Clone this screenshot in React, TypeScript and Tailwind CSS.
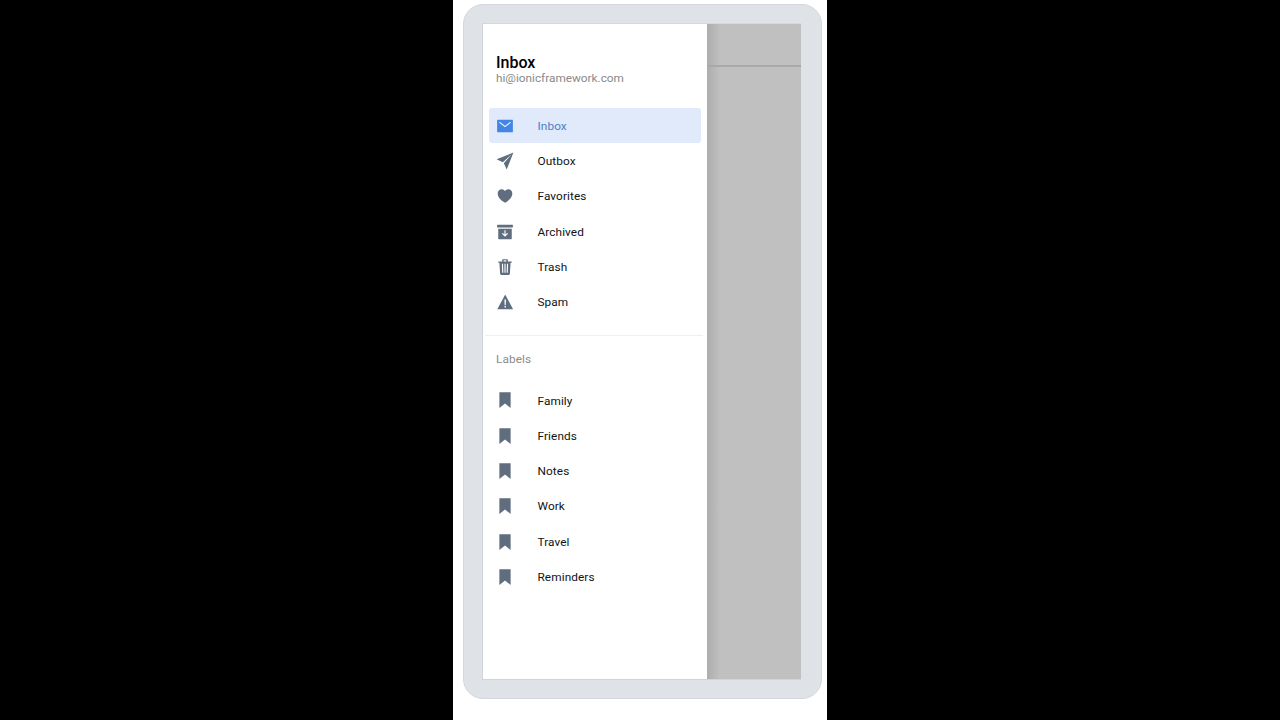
import type { ComponentType } from 'react';
import {
  IoArchiveSharp,
  IoBookmarkSharp,
  IoHeartSharp,
  IoMailSharp,
  IoPaperPlaneSharp,
  IoTrashSharp,
  IoWarningSharp,
} from 'react-icons/io5';

interface RowProps {
  icon: ComponentType<{ size?: number; className?: string }>;
  label: string;
  active?: boolean;
}

const folders: RowProps[] = [
  { icon: IoMailSharp, label: 'Inbox', active: true },
  { icon: IoPaperPlaneSharp, label: 'Outbox' },
  { icon: IoHeartSharp, label: 'Favorites' },
  { icon: IoArchiveSharp, label: 'Archived' },
  { icon: IoTrashSharp, label: 'Trash' },
  { icon: IoWarningSharp, label: 'Spam' },
];

const labels = ['Family', 'Friends', 'Notes', 'Work', 'Travel', 'Reminders'];

function Row({ icon: Icon, label, active }: RowProps) {
  return (
    <div
      className={`flex h-[35.3px] items-center rounded-[3px] pl-[7px] ${
        active ? 'bg-[#e1eafb] text-[#4a80c4]' : 'text-[#111316]'
      }`}
    >
      <Icon size={18} className={active ? 'text-[#4285e6]' : 'text-[#5f6d7e]'} />
      <span className="ml-[23.5px] pt-[2px] text-[11.8px] tracking-[0.1px]">{label}</span>
    </div>
  );
}

export default function App() {
  return (
    <div className="h-screen overflow-hidden bg-black font-['Roboto',sans-serif]">
      <div className="mx-auto h-full w-[374px] bg-white pl-[10px] pt-[4px]">
        <div className="h-[695px] w-[359px] rounded-[20px] border border-[#d3d8dd] bg-[#dfe3e8] pb-[18px] pl-[18px] pr-[20px] pt-[18px]">
          <div className="flex h-[657px] border border-[#cfd4d9] border-r-0 border-t-[#d3d8dd]">
            <div className="flex w-[224px] flex-col bg-white">
              <div className="px-[13px] pt-[30px]">
                <div className="text-[16px] font-medium leading-[18px] text-black">Inbox</div>
                <div className="h-[14px] text-[11.8px] leading-[13px] text-[#8a8a8a]">hi@ionicframework.com</div>
              </div>
              <div className="px-[6px] pt-[22px]">
                {folders.map((f) => (
                  <Row key={f.label} {...f} />
                ))}
              </div>
              <div className="ml-[2px] mr-[4px] mt-[15px] border-t border-[#f0f0f0]" />
              <div className="px-[13px] pt-[16px] text-[11.8px] leading-[14px] tracking-[0.1px] text-[#8c8c8c]">
                Labels
              </div>
              <div className="px-[6px] pt-[17px]">
                {labels.map((l) => (
                  <Row key={l} icon={IoBookmarkSharp} label={l} />
                ))}
              </div>
            </div>
            <div className="flex-1 bg-gradient-to-r from-[#adadad] from-0% via-[#c0c0c0] via-[14%] to-[#c0c0c0]">
              <div className="h-[43px] border-b-2 border-[#a9a9a9]" />
            </div>
          </div>
        </div>
      </div>
    </div>
  );
}
